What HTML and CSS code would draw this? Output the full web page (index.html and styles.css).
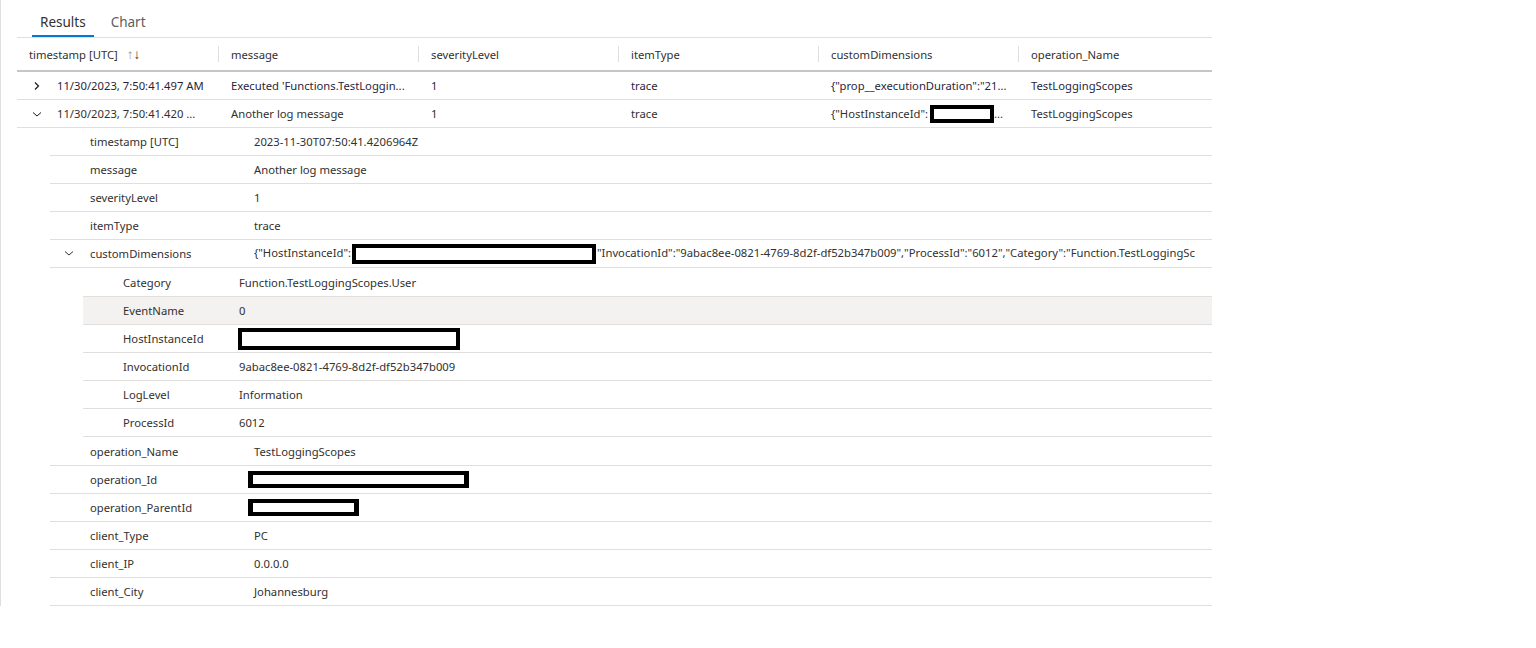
FILE: index.html
```html
<!DOCTYPE html>
<html lang="en">
<head>
  <meta charset="UTF-8" />
  <title>Results</title>
  <link rel="stylesheet" href="styles.css">
</head>
<body>
  <div class="pane">
    <div class="tabs">
      <div class="tab active">Results</div>
      <div class="tab">Chart</div>
    </div>

    <div class="grid">
      <div class="head">
        <div class="hcell">timestamp [UTC] <span class="sort"><span class="up">↑</span>↓</span></div>
        <div class="hcell">message</div>
        <div class="hcell">severityLevel</div>
        <div class="hcell">itemType</div>
        <div class="hcell">customDimensions</div>
        <div class="hcell">operation_Name</div>
      </div>

      <div class="row first">
        <div class="cell">
          <svg class="chev" width="10" height="10" viewBox="0 0 10 10"><path d="M3 1.5 L6.5 5 L3 8.5" fill="none" stroke="#1b1a19" stroke-width="1.2"/></svg>
          11/30/2023, 7:50:41.497 AM
        </div>
        <div class="cell">Executed 'Functions.TestLoggin...</div>
        <div class="cell">1</div>
        <div class="cell">trace</div>
        <div class="cell">{"prop__executionDuration":"21...</div>
        <div class="cell">TestLoggingScopes</div>
      </div>

      <div class="row">
        <div class="cell">
          <svg class="chev" width="10" height="10" viewBox="0 0 10 10"><path d="M1 3.5 L5 7 L9 3.5" fill="none" stroke="#1b1a19" stroke-width="1"/></svg>
          11/30/2023, 7:50:41.420 ...
        </div>
        <div class="cell">Another log message</div>
        <div class="cell">1</div>
        <div class="cell">trace</div>
        <div class="cell">{"HostInstanceId":<span class="redact r-small"></span>...</div>
        <div class="cell">TestLoggingScopes</div>
      </div>

      <div class="detail">
        <div class="drow"><div class="dkey">timestamp [UTC]</div><div class="dval">2023-11-30T07:50:41.4206964Z</div></div>
        <div class="drow"><div class="dkey">message</div><div class="dval">Another log message</div></div>
        <div class="drow"><div class="dkey">severityLevel</div><div class="dval">1</div></div>
        <div class="drow"><div class="dkey">itemType</div><div class="dval">trace</div></div>
        <div class="drow">
          <div class="dkey">
            <svg class="dchev" width="10" height="10" viewBox="0 0 10 10"><path d="M1 3.5 L5 7 L9 3.5" fill="none" stroke="#323130" stroke-width="1"/></svg>
            customDimensions
          </div>
          <div class="dval clip">{"HostInstanceId":<span class="redact r-wide"></span>"InvocationId":"9abac8ee-0821-4769-8d2f-df52b347b009","ProcessId":"6012","Category":"Function.TestLoggingSc</div>
        </div>

        <div class="nested">
          <div class="nrow top"><div class="nkey">Category</div><div class="nval">Function.TestLoggingScopes.User</div></div>
          <div class="nrow hover"><div class="nkey">EventName</div><div class="nval">0</div></div>
          <div class="nrow"><div class="nkey">HostInstanceId</div><div class="nval"><span class="redact r-host"></span></div></div>
          <div class="nrow"><div class="nkey">InvocationId</div><div class="nval">9abac8ee-0821-4769-8d2f-df52b347b009</div></div>
          <div class="nrow"><div class="nkey">LogLevel</div><div class="nval">Information</div></div>
          <div class="nrow"><div class="nkey">ProcessId</div><div class="nval">6012</div></div>
        </div>

        <div class="drow after"><div class="dkey">operation_Name</div><div class="dval">TestLoggingScopes</div></div>
        <div class="drow"><div class="dkey">operation_Id</div><div class="dval"><span class="redact r-op"></span></div></div>
        <div class="drow"><div class="dkey">operation_ParentId</div><div class="dval"><span class="redact r-parent"></span></div></div>
        <div class="drow"><div class="dkey">client_Type</div><div class="dval">PC</div></div>
        <div class="drow"><div class="dkey">client_IP</div><div class="dval">0.0.0.0</div></div>
        <div class="drow"><div class="dkey">client_City</div><div class="dval">Johannesburg</div></div>
      </div>
    </div>
  </div>
</body>
</html>
```

FILE: styles.css
```css
body {
  margin: 0;
  background: #ffffff;
  font-family: 'Segoe UI', 'Noto Sans', sans-serif;
  font-size: 11.25px;
  color: #323130;
}

.pane {
  width: 1195px;
  height: 606px;
  border-left: 1px solid #e1dfdd;
  padding-left: 16px;
}

/* tabs */
.tabs {
  display: flex;
  height: 37px;
  padding-left: 15px;
  border-bottom: 1px solid #e1dfdd;
  font-size: 13.5px;
}

.tab {
  padding: 0 8px;
  margin-right: 9px;
  line-height: 44px;
  color: #605e5c;
}

.tab.active {
  color: #323130;
  border-bottom: 2px solid #0078d4;
  height: 35px;
}

/* main table */
.head,
.row {
  display: grid;
  grid-template-columns: 201px repeat(5, 200px);
}

.head {
  height: 32px;
  border-bottom: 2px solid #c8c6c4;
}

.hcell {
  display: flex;
  align-items: center;
  padding-left: 13px;
  position: relative;
}

.hcell:first-child {
  padding-left: 12px;
}

.hcell + .hcell::before {
  content: '';
  position: absolute;
  left: 0;
  top: 8px;
  height: 16px;
  border-left: 1px solid #e1dfdd;
}

.sort {
  margin-left: 9px;
  font-size: 13.5px;
  color: #323130;
}

.sort .up {
  color: #b09070;
}

.row {
  height: 27px;
  border-bottom: 1px solid #e1dfdd;
}

.row.first {
  color: #2a1f3d;
}

.cell {
  display: flex;
  align-items: center;
  padding-left: 13px;
  white-space: nowrap;
  overflow: hidden;
}

.cell:first-child {
  padding-left: 12px;
}

.chev {
  margin-left: 3px;
  margin-right: 15px;
}

/* expanded record */
.detail {
  margin-left: 33px;
}

.drow,
.nrow {
  display: flex;
  height: 27px;
  border-bottom: 1px solid #e1dfdd;
  align-items: center;
  white-space: nowrap;
}

.drow.after {
  height: 28px;
}

.dkey {
  width: 164px;
  padding-left: 40px;
  position: relative;
}

.dchev {
  position: absolute;
  left: 14px;
  top: 2px;
}

.dval.clip {
  width: 958px;
  overflow: hidden;
  position: relative;
}

.nested {
  margin-left: 33px;
}

.nrow.top {
  height: 29px;
  padding-top: 1px;
  box-sizing: border-box;
}

.nrow.hover {
  background: #f3f2f1;
}

.nkey {
  width: 116px;
  padding-left: 40px;
}

/* redaction boxes */
.redact {
  display: inline-block;
  box-sizing: border-box;
  border: 4px solid #000;
  background: #fff;
  vertical-align: middle;
  position: relative;
}

.r-small {
  width: 64px;
  height: 18px;
  margin-left: 2px;
}

.r-wide {
  width: 244px;
  height: 20px;
  margin: 0 1px 0 1px;
}

.r-wide::after {
  content: '';
  position: absolute;
  left: 204px;
  top: -8px;
  width: 14px;
  height: 5px;
  background: #000;
  border-radius: 5px 5px 0 0;
}

.r-host {
  width: 222px;
  height: 22px;
  margin-left: -1px;
}

.r-op {
  width: 221px;
  height: 17px;
  margin-left: -6px;
  border-width: 4px 5px;
}

.r-parent {
  width: 111px;
  height: 17px;
  margin-left: -6px;
  border-width: 4px 5px;
}
```
